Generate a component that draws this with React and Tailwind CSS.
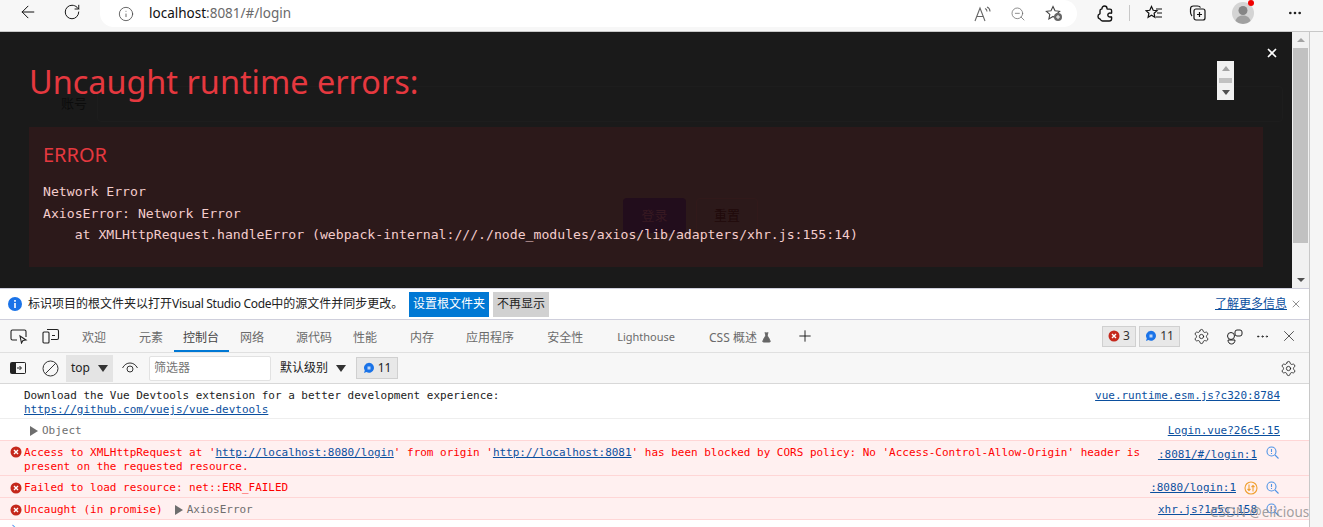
import React from "react"
import { ArrowLeft, RotateCw, Info, ZoomOut, Settings, Ellipsis, X, Plus, FlaskConical } from "lucide-react"

const tabs = [
  { label: "欢迎", cls: "ml-[22px] text-[#6b6b6b]" },
  { label: "元素", cls: "ml-[33px] text-[#6b6b6b]" },
  { label: "控制台", cls: "ml-[20px] text-[#444]" },
  { label: "网络", cls: "ml-[21px] text-[#6b6b6b]" },
  { label: "源代码", cls: "ml-[32px] text-[#6b6b6b]" },
  { label: "性能", cls: "ml-[21px] text-[#6b6b6b]" },
  { label: "内存", cls: "ml-[33px] text-[#6b6b6b]" },
  { label: "应用程序", cls: "ml-[32px] text-[#6b6b6b]" },
  { label: "安全性", cls: "ml-[33px] text-[#6b6b6b]" },
  { label: "Lighthouse", cls: "ml-[34px] text-[11px] text-[#6b6b6b]" },
  { label: "CSS 概述", cls: "ml-[34px] text-[#6b6b6b]" },
]

const ErrorDot = ({ className = "" }) => (
  <svg width="12" height="12" viewBox="0 0 12 12" className={className}>
    <circle cx="6" cy="6" r="5.5" fill="#c5281c" />
    <path d="M4 4l4 4M8 4l-4 4" stroke="#fff" strokeWidth="1.4" />
  </svg>
)

const MsgDot = () => (
  <svg width="12" height="12" viewBox="0 0 12 12">
    <path d="M6 .8a5 5 0 1 1-2.600 9.300L1 11l.8-2.500A5 5 0 0 1 6 .8z" fill="#1a73e8" />
    <rect x="4.500" y="4.500" width="3" height="3" fill="#bcd6f8" />
  </svg>
)

const Caret = ({ className = "" }) => (
  <svg width="8" height="10" viewBox="0 0 8 10" className={className}>
    <path d="M0 0l8 5-8 5z" fill="#6e6e6e" />
  </svg>
)

const DownCaret = () => (
  <svg width="10" height="7" viewBox="0 0 10 7">
    <path d="M0 0h10L5 7z" fill="#333" />
  </svg>
)

const Lens = () => (
  <svg width="13" height="13" viewBox="0 0 13 13" fill="none" stroke="#4f94e6" strokeWidth="1.100">
    <circle cx="5.500" cy="5.500" r="4.500" />
    <path d="M9 9l3.500 3.500" />
    <path d="M5.500 3v3" />
    <path d="M5.500 7v1" />
  </svg>
)

const Sync = () => (
  <svg width="14" height="14" viewBox="0 0 14 14" fill="none" stroke="#f0a030" strokeWidth="1.100">
    <circle cx="7" cy="7" r="6" />
    <path d="M5 3.500v6M3.500 8L5 9.500 6.500 8M9 10.500v-6M7.500 6L9 4.500 10.500 6" />
  </svg>
)

const Link = ({ children }) => <a className="text-[#0b4f9e] underline">{children}</a>

export default function App() {
  return (
    <div className="relative flex h-[527px] w-[1323px] flex-col overflow-hidden bg-white font-['Noto_Sans','Noto_Sans_CJK_SC',sans-serif]">
      {/* browser toolbar */}
      <div className="flex h-[32px] shrink-0 items-start border-b border-[#c8c8c8] bg-[#f7f7f7]">
        <div className="flex h-[24px] w-[100px] items-center pl-[18px]">
          <ArrowLeft size={20} strokeWidth={1.2} color="#111" />
          <RotateCw size={18} strokeWidth={1.3} color="#111" className="ml-[25px]" />
        </div>
        <div className="flex h-[27px] w-[977px] items-center rounded-r-[14px] rounded-bl-[14px] bg-white pl-[18px]">
          <Info size={16} strokeWidth={1.2} color="#444" />
          <span className="ml-[15px] text-[13.500px] text-[#111]">localhost<span className="text-[#6a6a6a]">:8081/#/login</span></span>
          <div className="ml-auto flex items-center gap-[19px] pr-[14px]">
            <svg width="17" height="16" viewBox="0 0 17 16" fill="none" stroke="#666" strokeWidth="1.100">
              <path d="M1 15L6 2l5 13M3 10.500h6" />
              <path d="M11 2.500c1.500.5 2 1.500 2 3M13 1c2 .8 3 2.300 3 4.500" />
            </svg>
            <ZoomOut size={16} strokeWidth={1.100} color="#666" />
            <svg width="18" height="17" viewBox="0 0 18 17" fill="none">
              <path d="M8 1.500l2 4.300 4.600.5-3.400 3.100.9 4.600L8 11.500l-4.100 2.500.9-4.600L1.400 6.300 6 5.800z" stroke="#444" strokeWidth="1.100" />
              <circle cx="13" cy="12" r="4" fill="#666" />
              <path d="M11 12h4M13 10v4" stroke="#fff" strokeWidth="1" />
            </svg>
          </div>
        </div>
        <div className="flex h-[26px] flex-1 items-center">
          <svg width="16" height="17" viewBox="0 0 16 17" fill="none" stroke="#111" strokeWidth="1.400" className="ml-[20px]">
            <path d="M5 3.500C5 2 6 1 7.500 1S10 2 10 3.500c0 .4.200.6.600.6h2.400c1 0 1.600.6 1.600 1.600v2c0 .5-.4.700-.8.500-1.500-.6-3 .3-3 1.800s1.500 2.400 3 1.800c.4-.2.800 0 .8.500v1.500c0 1.400-1 2.200-2.400 2.200H5.500c-1 0-1.700-.5-1.900-1.300-.1-.5-.5-.7-1-.9C1.500 13.400 1 12.400 1 11.400c0-1 .6-1.900 1.400-2.200.4-.2.600-.4.600-.8V5.700c0-1 .6-1.600 1.500-1.600.3 0 .5-.2.500-.6z" />
          </svg>
          <div className="ml-[16px] h-[16px] w-px bg-[#c8c8c8]" />
          <svg width="18" height="16" viewBox="0 0 18 16" fill="none" stroke="#111" strokeWidth="1.200" className="ml-[15px]">
            <path d="M6.500 1.500l1.700 3.800 3.800.4-2.900 2.600.8 4-3.400-2-3.400 2 .8-4L1 5.700l3.800-.4z" />
            <path d="M11 4h6M12 8h5M11 12h6" />
          </svg>
          <svg width="18" height="18" viewBox="0 0 18 18" fill="none" stroke="#111" strokeWidth="1.200" className="ml-[26px]">
            <rect x="5" y="5" width="11" height="11" rx="2" />
            <path d="M10.500 8v5M8 10.500h5" />
            <path d="M3 12c-1-1-1.500-2-1.500-4V5c0-2 1-3 3-3h4c1.500 0 2.500.5 3 1.500" />
          </svg>
          <div className="relative ml-[25px] flex h-[22px] w-[22px] items-start justify-center overflow-visible rounded-full bg-[#d4d4d4]">
            <svg width="22" height="22" viewBox="0 0 22 22">
              <circle cx="11" cy="8.500" r="4.500" fill="#858585" />
              <path d="M3.500 19c1-4 4-5.500 7.500-5.500s6.500 1.500 7.500 5.500a11 11 0 0 1-15 0z" fill="#a0a0a0" />
            </svg>
            <div className="absolute right-[0px] top-[-2px] h-[6px] w-[6px] rounded-full bg-[#f00000]" />
          </div>
          <Ellipsis size={16} strokeWidth={2} color="#222" className="ml-[33px]" />
        </div>
      </div>

      <div className="flex min-h-0 flex-1">
        <div className="flex w-[1309px] shrink-0 flex-col">
          {/* page with the error overlay */}
          <div className="flex h-[256px] shrink-0">
            <div className="relative flex-1 overflow-hidden bg-[#1a1a1a] px-[29px]">
              {/* login form showing through the overlay */}
              <span className="absolute left-[61px] top-[62px] text-[13px] text-[#0c0c0c]">账号</span>
              <div className="absolute left-[97px] top-[54px] h-[36px] w-[1186px] rounded-[4px] border border-[#1d1d1d]" />
              <div className="absolute left-[623px] top-[166px] flex h-[35px] w-[63px] items-center justify-center rounded-[4px] bg-[#0f0c1c] text-[13px] text-[#261a22]">登录</div>
              <div className="absolute left-[696px] top-[166px] flex h-[35px] w-[62px] items-center justify-center rounded-[4px] border border-[#1f1a1a] text-[13px] text-[#0c0808]">重置</div>

              <h1 className="relative pt-[25px] text-[32.400px] leading-[48px] text-[#e5383f]">Uncaught runtime errors:</h1>
              <div className="relative mt-[22px] h-[140px] bg-[#ff1c2a]/[0.083] px-[14px] pt-[14px]">
                <div className="text-[20px] leading-[28px] text-[#e5383f]">ERROR</div>
                <pre className="mt-[12px] font-['DejaVu_Sans_Mono',monospace] text-[13.150px] leading-[21.600px] text-[#f4cccc]">
                  {"Network Error\nAxiosError: Network Error\n    at XMLHttpRequest.handleError (webpack-internal:///./node_modules/axios/lib/adapters/xhr.js:155:14)"}
                </pre>
              </div>

              <X size={14} strokeWidth={3} color="#fff" className="absolute left-[1265px] top-[14px]" />
              <div className="absolute left-[1217px] top-[29px] flex h-[39px] w-[17px] flex-col items-center justify-between bg-[#f1f1f1] py-[5px]">
                <div className="h-0 w-0 border-x-[4px] border-b-[5px] border-x-transparent border-b-[#a3a3a3]" />
                <div className="h-[5px] w-[13px] bg-[#c1c1c1]" />
                <div className="h-0 w-0 border-x-[4px] border-t-[5px] border-x-transparent border-t-[#505050]" />
              </div>
            </div>
            <div className="flex w-[17px] flex-col items-center bg-[#f1f1f1]">
              <div className="mt-[6px] h-0 w-0 border-x-[4px] border-b-[4px] border-x-transparent border-b-[#a3a3a3]" />
              <div className="mt-[6px] h-[195px] w-[15px] bg-[#c1c1c1]" />
              <div className="mt-auto mb-[6px] h-0 w-0 border-x-[4px] border-t-[4px] border-x-transparent border-t-[#505050]" />
            </div>
          </div>

          {/* devtools */}
          <div className="flex h-[32px] shrink-0 items-center border-y border-[#cfcfdc] bg-white pl-[8px] text-[12px] text-[#222]">
            <svg width="14" height="14" viewBox="0 0 14 14">
              <circle cx="7" cy="7" r="7" fill="#1a73e8" />
              <rect x="6.200" y="6" width="1.600" height="5" fill="#fff" />
              <rect x="6.200" y="3" width="1.600" height="1.800" fill="#fff" />
            </svg>
            <span className="ml-[6px] w-[381px] whitespace-nowrap">标识项目的根文件夹以打开<span className="tracking-[-0.3px]">Visual Studio Code</span>中的源文件并同步更改。</span>
            <div className="flex h-[25px] w-[80px] items-center justify-center bg-[#0078d4] text-white">设置根文件夹</div>
            <div className="ml-[4px] flex h-[25px] w-[56px] items-center justify-center bg-[#d1d1d1]">不再显示</div>
            <a className="ml-auto text-[#0b4f9e] underline">了解更多信息</a>
            <X size={12} strokeWidth={1} color="#222" className="ml-[3px] mr-[7px]" />
          </div>

          <div className="flex h-[33px] shrink-0 items-center border-b border-[#e0e0e0] bg-[#f7f7f7] pl-[10px] text-[12px] shadow-[0_1px_1px_rgba(0,0,0,0.05)]">
            <svg width="18" height="16" viewBox="0 0 18 16" fill="none" stroke="#222" strokeWidth="1.100">
              <path d="M7 12H2.500C1.500 12 1 11.500 1 10.500v-7C1 2.500 1.500 2 2.500 2h12c1 0 1.500.5 1.500 1.500V9" />
              <path d="M10 8l1.500 7 1.500-2.500 3-.5z" />
            </svg>
            <svg width="18" height="16" viewBox="0 0 18 16" fill="none" stroke="#222" strokeWidth="1.100" className="ml-[14px]">
              <rect x="1" y="4" width="6" height="11" rx="1" />
              <path d="M5 1.500h10c1 0 1.500.5 1.500 1.500v7c0 1-.5 1.500-1.500 1.500H9M10 7.500h3" />
            </svg>
            {tabs.map((t, i) => (
              <div key={t.label} className={t.cls + " relative flex h-[33px] items-center pt-[3px]"}>
                {t.label}
                {i === 2 && <div className="absolute bottom-[1px] left-[-9px] right-[-10px] h-[2px] bg-[#0078d4]" />}
                {i === 10 && <FlaskConical size={11} fill="#666" color="#666" className="ml-[4px]" />}
              </div>
            ))}
            <Plus size={18} strokeWidth={1.200} color="#111" className="ml-[24px]" />
            <div className="ml-auto flex h-[21px] w-[34px] items-center justify-center gap-[3px] border border-[#d0d0d0] bg-[#e8e8e8] text-[#333]">
              <ErrorDot />3
            </div>
            <div className="ml-[3px] flex h-[21px] w-[41px] items-center justify-center gap-[3px] border border-[#d0d0d0] bg-[#e8e8e8] text-[#333]">
              <MsgDot />11
            </div>
            <Settings size={17} strokeWidth={1.100} color="#111" className="ml-[13px]" />
            <svg width="17" height="17" viewBox="0 0 17 17" fill="none" stroke="#222" strokeWidth="1" className="ml-[16px]">
              <circle cx="5" cy="8" r="3.500" />
              <rect x="9" y="2" width="7" height="6" rx="2" />
              <path d="M2 12h7c0 2.500-1.500 4-3.500 4S2 14.500 2 12z" />
            </svg>
            <Ellipsis size={15} strokeWidth={1.500} color="#222" className="ml-[12px]" />
            <X size={18} strokeWidth={1} color="#222" className="ml-[10px] mr-[11px]" />
          </div>

          <div className="flex h-[31px] shrink-0 items-center border-b border-[#d8d8d8] bg-[#f7f7f7] pl-[10px] text-[12px] text-[#222]">
            <svg width="16" height="14" viewBox="0 0 16 14">
              <rect x="0" y="1" width="16" height="12" rx="2" fill="#222" />
              <rect x="6" y="2" width="9" height="10" fill="#f7f7f7" />
              <path d="M7 7h4M9.500 5l2 2-2 2" stroke="#222" fill="none" />
            </svg>
            <svg width="17" height="17" viewBox="0 0 17 17" fill="none" stroke="#333" strokeWidth="1" className="ml-[16px]">
              <circle cx="8.500" cy="8.500" r="7.500" />
              <path d="M3.300 13.700L13.700 3.300" />
            </svg>
            <div className="ml-[7px] flex h-[27px] w-[47px] items-center gap-[8px] bg-[#e4e4e4] pl-[5px]">
              top <DownCaret />
            </div>
            <svg width="16" height="12" viewBox="0 0 16 12" fill="none" stroke="#333" strokeWidth="1" className="ml-[9px]">
              <path d="M.5 6C2.500 2.500 5 1 8 1s5.500 1.500 7.500 5" />
              <circle cx="8" cy="7" r="3" />
            </svg>
            <div className="ml-[11px] flex h-[25px] w-[122px] items-center rounded-[2px] border border-[#e2e2e2] bg-white pl-[4px] text-[#757575]">筛选器</div>
            <span className="ml-[9px]">默认级别</span>
            <span className="ml-[8px]"><DownCaret /></span>
            <div className="ml-[10px] flex h-[22px] w-[42px] items-center justify-center gap-[3px] border border-[#d0d0d0] bg-[#e8e8e8]">
              <MsgDot />11
            </div>
            <Settings size={17} strokeWidth={1.100} color="#111" className="ml-auto mr-[12px]" />
          </div>

          {/* console */}
          <div className="font-['DejaVu_Sans_Mono',monospace] text-[10.970px] leading-[14px]">
            <div className="flex h-[35px] justify-between border-b border-[#eeeeee] pl-[24px] pr-[29px] pt-[5px] text-[#222]">
              <div>Download the Vue Devtools extension for a better development experience:<br /><Link>https://github.com/vuejs/vue-devtools</Link></div>
              <Link>vue.runtime.esm.js?c320:8784</Link>
            </div>
            <div className="flex h-[22px] items-center justify-between border-b border-[#ffd6d6] pl-[30px] pr-[29px] pt-[3px] text-[#6e6e6e]">
              <div className="flex items-center gap-[4px]"><Caret />Object</div>
              <Link>Login.vue?26c5:15</Link>
            </div>
            <div className="flex h-[35px] border-b border-[#ffd6d6] bg-[#fff0f0] pl-[10px] pt-[5px] text-[#ff0000]">
              <ErrorDot className="shrink-0" />
              <div className="ml-[2px] w-[1120px]">Access to XMLHttpRequest at '<Link>http://localhost:8080/login</Link>' from origin '<Link>http://localhost:8081</Link>' has been blocked by CORS policy: No 'Access-Control-Allow-Origin' header is<br />present on the requested resource.</div>
              <div className="ml-auto mt-[2px]"><Link>:8081/#/login:1</Link></div>
              <div className="ml-[9px] mr-[30px]"><Lens /></div>
            </div>
            <div className="flex h-[22px] items-center border-b border-[#ffd6d6] bg-[#fff0f0] pl-[10px] pt-[2px] text-[#ff0000]">
              <ErrorDot />
              <div className="ml-[2px]">Failed to load resource: net::ERR_FAILED</div>
              <div className="ml-auto"><Link>:8080/login:1</Link></div>
              <div className="ml-[8px]"><Sync /></div>
              <div className="ml-[8px] mr-[30px]"><Lens /></div>
            </div>
            <div className="flex h-[22px] items-center border-b border-[#ffd6d6] bg-[#fff0f0] pl-[10px] pt-[2px] text-[#ff0000]">
              <ErrorDot />
              <div className="ml-[2px]">Uncaught (in promise)</div>
              <Caret className="ml-[12px]" />
              <span className="ml-[4px] text-[#6e6e6e]">AxiosError</span>
              <div className="ml-auto"><Link>xhr.js?1a5c:158</Link></div>
              <div className="ml-[9px] mr-[30px]"><Lens /></div>
            </div>
            <div className="pl-[10px] text-[#1a73e8]">›</div>
          </div>
        </div>
        <div className="flex-1 border-l border-[#c8c8c8] bg-[#f5f5f5]" />
      </div>

      {/* blog watermark */}
      <div className="absolute left-[1210px] top-[503px] text-[13.500px] leading-[18px] text-[#8a8a8a]/80">CSDN @elicious</div>
    </div>
  )
}
